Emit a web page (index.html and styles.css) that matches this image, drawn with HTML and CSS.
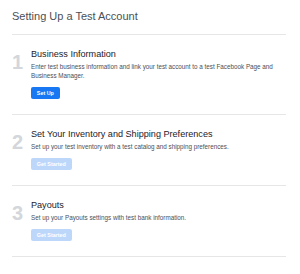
FILE: index.html
```html
<!DOCTYPE html>
<html lang="en">
<head>
    <meta charset="UTF-8">
    <meta name="viewport" content="width=device-width, initial-scale=1.0">
    <title>Setting Up a Test Account</title>
    <link rel="stylesheet" href="styles.css">
</head>
<body>
    <div class="page">
        <h1 class="title">Setting Up a Test Account</h1>

        <div class="step">
            <div class="num">1</div>
            <div class="info">
                <h2>Business Information</h2>
                <p>Enter test business information and link your test account to a test Facebook Page and Business Manager.</p>
                <button class="btn">Set Up</button>
            </div>
        </div>

        <div class="step">
            <div class="num">2</div>
            <div class="info">
                <h2>Set Your Inventory and Shipping Preferences</h2>
                <p>Set up your test inventory with a test catalog and shipping preferences.</p>
                <button class="btn off">Get Started</button>
            </div>
        </div>

        <div class="step">
            <div class="num">3</div>
            <div class="info">
                <h2>Payouts</h2>
                <p>Set up your Payouts settings with test bank information.</p>
                <button class="btn off">Get Started</button>
            </div>
        </div>
    </div>
</body>
</html>
```

FILE: styles.css
```css
* {
    margin: 0;
    padding: 0;
    box-sizing: border-box;
}

body {
    background-color: #fff;
    font-family: "Liberation Sans", Arial, sans-serif;
}

.page {
    padding: 0 14px 0 12px;
}

.title {
    font-size: 11px;
    line-height: 13px;
    font-weight: normal;
    color: #4b4f56;
    padding: 10px 0 11px;
    border-bottom: 1px solid #e6e6e6;
}

.step {
    display: flex;
    padding: 14px 0 15px;
    border-bottom: 1px solid #e6e6e6;
}

.num {
    width: 19px;
    flex-shrink: 0;
    font-size: 20px;
    line-height: 20px;
    padding-top: 3px;
    font-weight: bold;
    color: #d3d6db;
}

.info h2 {
    font-size: 9.1px;
    line-height: 11px;
    font-weight: normal;
    color: #1d2129;
}

.info p {
    font-size: 6.3px;
    line-height: 9px;
    margin-top: 1.5px;
    color: #4b4f56;
}

.btn {
    display: block;
    margin-top: 7px;
    height: 12.5px;
    padding: 0 5.8px;
    border: none;
    border-radius: 2px;
    background-color: #1877f2;
    color: #fff;
    font-family: "Liberation Sans", Arial, sans-serif;
    font-size: 5.4px;
    font-weight: bold;
}

.btn.off {
    background-color: #bdd7fb;
}
```
